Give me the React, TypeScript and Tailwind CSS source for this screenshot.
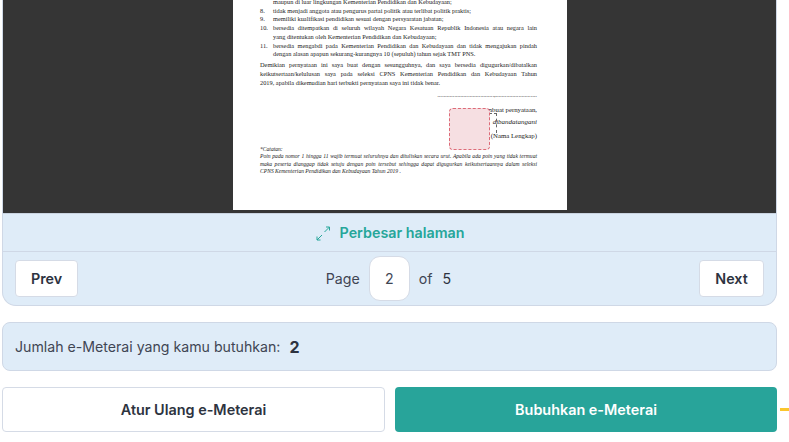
import React from "react";

const Item = ({ n, children }: { n?: string; children: React.ReactNode }) => (
  <div className="flex">
    <div className="w-[13px] shrink-0">{n}</div>
    <div className="flex-1 [text-align:justify] [text-align-last:justify]">{children}</div>
  </div>
);
const ItemL = ({ n, children }: { n?: string; children: React.ReactNode }) => (
  <div className="flex">
    <div className="w-[13px] shrink-0">{n}</div>
    <div className="flex-1">{children}</div>
  </div>
);
const J = ({ children }: { children: React.ReactNode }) => (
  <div className="[text-align:justify] [text-align-last:justify]">{children}</div>
);

export default function App() {
  return (
    <div className="relative h-[442px] w-[789px] overflow-hidden bg-white font-['Inter',sans-serif] text-[#2d3340]">
      <div className="ml-[2px] h-[306px] w-[775px] overflow-hidden rounded-b-[14px] border border-t-0 border-[#cfd8e6] bg-[#dfecf8]">
        <div className="flex h-[214px] justify-start overflow-hidden border-b border-[#c9d3e0] bg-[#353535] pl-[230px]">
          <div className="h-[210px] w-[334px] shrink-0 overflow-hidden bg-white pl-[27px] pr-[30px] font-['Liberation_Serif',serif] text-[6.35px] leading-[8.7px] whitespace-nowrap text-[#222] antialiased">
            <div className="-mt-[2px]">
              <ItemL>maupun di luar lingkungan Kementerian Pendidikan dan Kebudayaan;</ItemL>
              <ItemL n="8.">tidak menjadi anggota atau pengurus partai politik atau terlibat politik praktis;</ItemL>
              <ItemL n="9.">memiliki kualifikasi pendidikan sesuai dengan persyaratan jabatan;</ItemL>
              <Item n="10.">bersedia ditempatkan di seluruh wilayah Negara Kesatuan Republik Indonesia atau negara lain</Item>
              <ItemL>yang ditentukan oleh Kementerian Pendidikan dan Kebudayaan;</ItemL>
              <Item n="11.">bersedia mengabdi pada Kementerian Pendidikan dan Kebudayaan dan tidak mengajukan pindah</Item>
              <ItemL>dengan alasan apapun sekurang-kurangnya 10 (sepuluh) tahun sejak TMT PNS.</ItemL>
            </div>
            <div className="mt-[2.4px]">
              <J>Demikian pernyataan ini saya buat dengan sesungguhnya, dan saya bersedia digugurkan/dibatalkan</J>
              <J>keikutsertaan/kelulusan saya pada seleksi CPNS Kementerian Pendidikan dan Kebudayaan Tahun</J>
              <div>2019, apabila dikemudian hari terbukti pernyataan saya ini tidak benar.</div>
            </div>
            <div className="mt-[5px] text-right text-[5px] font-bold tracking-[0.28px]">.....................................,...........................</div>
            <div className="relative mt-[2px] h-[35px] text-right text-[6.8px]">
              <div className="leading-[13px]">Yang membuat pernyataan,</div>
              <div className="text-[7px] leading-[13px] italic">dibandatangani</div>
              <div className="leading-[13px]">(Nama Lengkap)</div>
              <div className="absolute top-[10px] right-[40px] h-[20px] w-[8px] border-t border-r border-dashed border-[#666]" />
              <div className="absolute top-[5px] right-[47px] h-[42px] w-[41px] rounded-[4px] border border-dashed border-[#dd6b78] bg-[#f6dfe2]" />
            </div>
            <div className="mt-[8px] text-[5.6px] leading-[7.3px] italic">
              <div>*Catatan:</div>
              <J>Poin pada nomor 1 hingga 11 wajib termuat seluruhnya dan dituliskan secara urut. Apabila ada poin yang tidak termuat</J>
              <J>maka peserta dianggap tidak setuju dengan poin tersebut sehingga dapat digugurkan keikutsertaannya dalam seleksi</J>
              <div>CPNS Kementerian Pendidikan dan Kebudayaan Tahun 2019 .</div>
            </div>
          </div>
        </div>
        <div className="flex h-[38px] items-center justify-center gap-[9px] border-b border-[#cfd8e6] pl-[1px] text-[14.3px] font-semibold text-[#26a69a]">
          <svg width="15" height="15" viewBox="0 0 15 15" fill="none" stroke="#26a69a" strokeWidth="1" className="mt-[1px]">
            <path d="M8.5 6 L13.5 1 M10 1 H13.5 V4.5" />
            <path d="M6 9 L1 14 M1 10.5 V14 H4.5" />
          </svg>
          <span>Perbesar halaman</span>
        </div>
        <div className="flex h-[53px] items-center justify-between pr-[12px] pl-[12px]">
          <button className="h-[37px] w-[63px] rounded-[4px] border border-[#d5dbe6] bg-white text-[14.3px] font-semibold">Prev</button>
          <div className="flex items-center text-[14.2px] text-[#3f4654]">
            <span>Page</span>
            <div className="mx-[9px] flex h-[45px] w-[41px] items-center justify-center rounded-[11px] border border-[#d5dbe6] bg-white">2</div>
            <span>of</span>
            <span className="ml-[10px] text-[#2d3340]">5</span>
          </div>
          <button className="h-[37px] w-[65px] rounded-[4px] border border-[#d5dbe6] bg-white text-[14.3px] font-semibold">Next</button>
        </div>
      </div>
      <div className="mt-[16px] ml-[2px] flex h-[49px] w-[775px] items-center rounded-[8px] border border-[#cfd8e6] bg-[#dfecf8] pl-[12px] text-[14.15px] text-[#3f4654]">
        <span>Jumlah e-Meterai yang kamu butuhkan:</span>
        <span className="ml-[9px] text-[16px] font-bold text-[#2d3340]">2</span>
      </div>
      <div className="mt-[16px] ml-[2px] flex w-[787px] items-center gap-[10px]">
        <button className="h-[45px] w-[383px] rounded-[4px] border border-[#d5dbe6] bg-white text-[14.4px] font-semibold">Atur Ulang e-Meterai</button>
        <button className="h-[45px] w-[382px] rounded-[4px] bg-[#28a49a] text-[14.4px] font-semibold text-white">Bubuhkan e-Meterai</button>
        <div className="-ml-[7px] h-[3px] w-[9px] bg-[#fbc62d]" />
      </div>
    </div>
  );
}
